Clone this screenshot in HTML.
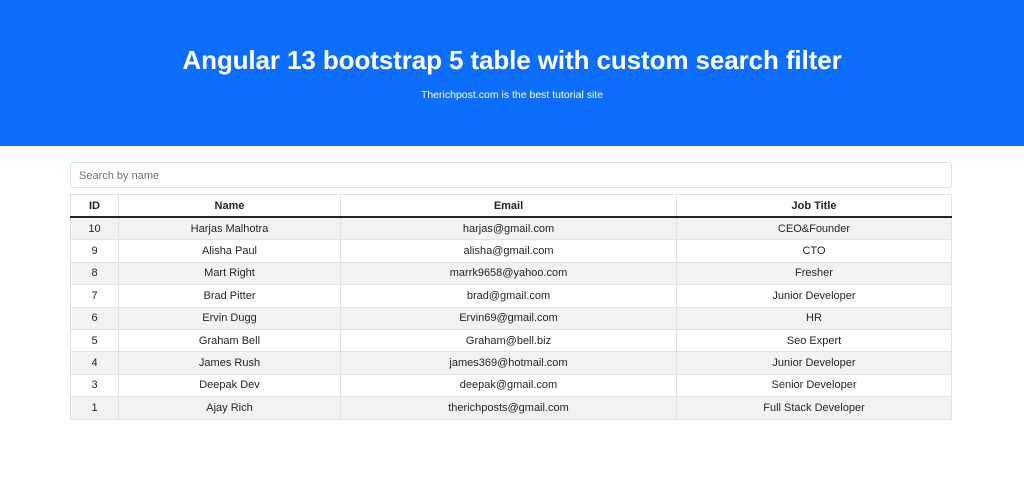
<!DOCTYPE html><html><head><style>
body{margin:0;width:1024px;height:502px;background:#fff;font-family:"Liberation Sans",sans-serif;color:#212529;overflow:hidden}
.hd{background:#0d6efd;height:146px;color:#fff;text-align:center;overflow:hidden}
.hd h1{margin:0;padding-top:44px;font-size:26px;font-weight:bold;line-height:32px;letter-spacing:-0.1px}
.hd p{margin:13px 0 0;font-size:10.5px}
.s{position:absolute;left:70px;top:162px;border:1px solid #dee2e6;border-radius:3px;font-size:11px;color:#6c757d;line-height:26px;padding-left:8px;box-sizing:border-box;width:882px;height:26px}
table{position:absolute;left:70px;top:194px;width:882px;border-collapse:collapse;font-size:11px}
td,th{border:1px solid #dee2e6;text-align:center;height:21.4px;padding:0}
th{height:21px;border-bottom:2px solid #212529;font-weight:bold}
tbody tr:nth-child(odd){background:#f2f2f2}
</style></head><body>
<div class="hd"><h1>Angular 13 bootstrap 5 table with custom search filter</h1><p>Therichpost.com is the best tutorial site</p></div>
<div class="s">Search by name</div>
<table><thead><tr><th style="width:47px">ID</th><th style="width:221px">Name</th><th style="width:335px">Email</th><th>Job Title</th></tr></thead><tbody>
<tr><td>10</td><td>Harjas Malhotra</td><td>harjas@gmail.com</td><td>CEO&amp;Founder</td></tr>
<tr><td>9</td><td>Alisha Paul</td><td>alisha@gmail.com</td><td>CTO</td></tr>
<tr><td>8</td><td>Mart Right</td><td>marrk9658@yahoo.com</td><td>Fresher</td></tr>
<tr><td>7</td><td>Brad Pitter</td><td>brad@gmail.com</td><td>Junior Developer</td></tr>
<tr><td>6</td><td>Ervin Dugg</td><td>Ervin69@gmail.com</td><td>HR</td></tr>
<tr><td>5</td><td>Graham Bell</td><td>Graham@bell.biz</td><td>Seo Expert</td></tr>
<tr><td>4</td><td>James Rush</td><td>james369@hotmail.com</td><td>Junior Developer</td></tr>
<tr><td>3</td><td>Deepak Dev</td><td>deepak@gmail.com</td><td>Senior Developer</td></tr>
<tr><td>1</td><td>Ajay Rich</td><td>therichposts@gmail.com</td><td>Full Stack Developer</td></tr>
</tbody></table>
</body></html>
